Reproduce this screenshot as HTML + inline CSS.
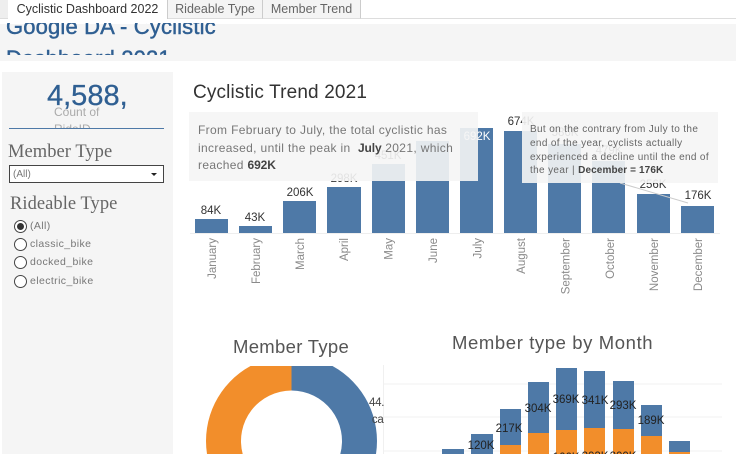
<!DOCTYPE html>
<html><head><meta charset="utf-8"><style>
html,body{margin:0;padding:0;background:#fff;overflow:hidden}
#p{position:relative;width:736px;height:454px;overflow:hidden;background:#fff;font-family:"Liberation Sans",sans-serif;color:#555}
#p div{position:absolute;white-space:nowrap}
.b{background:#4e79a7}.o{background:#f28e2b}
.v{font-size:11.5px;color:#333;text-align:center;width:44px;line-height:13px}
.m{font-size:11.5px;color:#8a8a8a;transform-origin:right top;transform:rotate(-90deg);line-height:13px;text-align:right}
.s{font-size:11.5px;color:#222;text-align:center;width:44px;line-height:13px}
.r{width:11px;height:11px;border:1px solid #444;border-radius:50%;left:14px;background:#fff}
.l{left:30px;font-size:10.5px;color:#777;letter-spacing:.4px;line-height:13px}
.t{top:0;height:18px;line-height:18px;font-size:12.5px;text-align:center;color:#666;background:#f4f4f4;border-right:1px solid #ccc;border-bottom:1px solid #ddd}
.n{font-size:12px;color:#777;line-height:17.5px;letter-spacing:.35px}
.n b{color:#444;letter-spacing:-.1px}
</style></head><body><div id="p">
<div style="left:0;top:0;width:736px;height:18px;background:#fff;border-bottom:1px solid #ddd"></div>
<div class="t" style="left:0;width:8px;background:#eee"></div>
<div class="t" style="left:8px;width:159px;background:#fff;color:#333;border-bottom:none;height:19px">Cyclistic Dashboard 2022</div>
<div class="t" style="left:168px;width:94px">Rideable Type</div>
<div class="t" style="left:263px;width:97px">Member Trend</div>

<div style="left:0;top:24px;width:736px;height:37px;background:#f5f5f5"></div>
<div style="left:0;top:23px;width:736px;height:32px;overflow:hidden">
<div style="left:6px;top:-12.5px;font-size:22px;color:#2f5f92;line-height:32px;letter-spacing:.15px;-webkit-text-stroke:.45px #2f5f92">Google DA - Cyclistic<br>Dashboard 2021</div>
</div>

<div style="left:2px;top:72px;width:171px;height:382px;background:#f5f5f5"></div>
<div style="left:30px;top:79px;width:99px;height:36px;overflow:hidden"><div style="left:17px;top:0;font-size:29px;color:#2f5f92;line-height:34px;-webkit-text-stroke:.3px #2f5f92">4,588,</div></div>
<div style="left:54px;top:104px;width:60px;height:24px;overflow:hidden;font-size:12px;color:#aaa;line-height:17px"><span style="display:block">Count of</span><span style="display:block">RideID</span></div>
<div style="left:9px;top:128px;width:155px;height:1px;background:#4e79a7"></div>
<div style="left:8px;top:142px;font-family:'Liberation Serif',serif;font-size:18.5px;color:#666;line-height:21px;letter-spacing:.05px">Member Type</div>
<div style="left:9px;top:165px;width:153px;height:16px;background:#fff;border:1px solid #444"></div>
<div style="left:13px;top:168px;font-size:10px;color:#777;line-height:13px">(All)</div>
<div style="left:151px;top:173px;width:0;height:0;border-left:3px solid transparent;border-right:3px solid transparent;border-top:3px solid #222"></div>
<div style="left:10px;top:194px;font-family:'Liberation Serif',serif;font-size:18.5px;color:#666;line-height:21px;letter-spacing:.05px">Rideable Type</div>
<div class="r" style="top:220px"></div><div style="left:17px;top:223px;width:7px;height:7px;border-radius:50%;background:#333"></div>
<div class="l" style="top:220px">(All)</div>
<div class="r" style="top:238px"></div><div class="l" style="top:238px">classic_bike</div>
<div class="r" style="top:256px"></div><div class="l" style="top:256px">docked_bike</div>
<div class="r" style="top:275px"></div><div class="l" style="top:275px">electric_bike</div>

<div style="left:193px;top:81px;font-size:19px;color:#333;line-height:23px;letter-spacing:.15px">Cyclistic Trend 2021</div>

<div style="left:190px;top:233px;width:530px;height:1px;background:#eee"></div>
<div class="b" style="left:195px;top:219px;width:33px;height:14px"></div>
<div class="b" style="left:239px;top:226px;width:33px;height:7px"></div>
<div class="b" style="left:283px;top:201px;width:33px;height:32px"></div>
<div class="b" style="left:327px;top:187px;width:34px;height:46px"></div>
<div class="b" style="left:372px;top:164px;width:33px;height:69px"></div>
<div class="b" style="left:416px;top:141px;width:33px;height:92px"></div>
<div class="b" style="left:460px;top:128px;width:33px;height:105px"></div>
<div class="b" style="left:504px;top:131px;width:33px;height:102px"></div>
<div class="b" style="left:548px;top:144px;width:33px;height:89px"></div>
<div class="b" style="left:592px;top:161px;width:33px;height:72px"></div>
<div class="b" style="left:637px;top:194px;width:33px;height:39px"></div>
<div class="b" style="left:681px;top:206px;width:33px;height:27px"></div>

<div class="v" style="left:189px;top:205px">84K</div>
<div class="v" style="left:233px;top:212px">43K</div>
<div class="v" style="left:278px;top:187px">206K</div>
<div class="v" style="left:322px;top:173px">298K</div>
<div class="v" style="left:366px;top:150px">451K</div>
<div class="v" style="left:455px;top:131px;color:#fff">692K</div>
<div class="v" style="left:499px;top:116px">674K</div>
<div class="v" style="left:543px;top:127px">586K</div>
<div class="v" style="left:587px;top:145px">479K</div>
<div class="v" style="left:631px;top:179px">256K</div>
<div class="v" style="left:676px;top:190px">176K</div>

<div class="m" style="right:529px;top:238px">January</div>
<div class="m" style="right:485px;top:238px">February</div>
<div class="m" style="right:441px;top:238px">March</div>
<div class="m" style="right:397px;top:238px">April</div>
<div class="m" style="right:352px;top:238px">May</div>
<div class="m" style="right:308px;top:238px">June</div>
<div class="m" style="right:264px;top:238px">July</div>
<div class="m" style="right:220px;top:238px">August</div>
<div class="m" style="right:176px;top:238px">September</div>
<div class="m" style="right:131px;top:238px">October</div>
<div class="m" style="right:87px;top:238px">November</div>
<div class="m" style="right:43px;top:238px">December</div>

<svg style="position:absolute;left:0;top:0" width="736" height="454"><line x1="620" y1="183" x2="688" y2="203" stroke="#ccc" stroke-width="1"/></svg>

<div style="left:189px;top:112px;width:289px;height:69px;background:rgba(245,245,245,.9)"></div>
<div class="n" style="left:198px;top:122px">From February to July, the total cyclistic has<br>increased, until the peak in&nbsp; <b>July</b> 2021, which<br>reached <b>692K</b></div>
<div style="left:522px;top:112px;width:196px;height:71px;background:rgba(245,245,245,.9)"></div>
<div style="left:530px;top:123px;font-size:10px;color:#666;line-height:13.8px;letter-spacing:.35px">But on the contrary from July to the<br>end of the year, cyclists actually<br>experienced a decline until the end of<br>the year | <b style="color:#444;letter-spacing:.1px">December = 176K</b></div>

<div style="left:233px;top:335px;font-size:18.5px;color:#555;line-height:23px;letter-spacing:.3px">Member Type</div>
<div style="left:452px;top:331px;font-size:18.5px;color:#555;line-height:23px;letter-spacing:.6px">Member type by Month</div>

<svg style="position:absolute;left:0;top:0" width="736" height="454">
<path d="M291.5 366L250.5 366A85.5 85.5 0 0 0 207 454L242.7 454A50.5 50.5 0 0 1 291.5 390.5Z" fill="#f28e2b"/>
<path d="M291.5 366L332.5 366A85.5 85.5 0 0 1 376 454L340.3 454A50.5 50.5 0 0 0 291.5 390.5Z" fill="#4e79a7"/>
<line x1="383" y1="384" x2="722" y2="384" stroke="#f0f0f0"/>
<line x1="383" y1="417" x2="722" y2="417" stroke="#f0f0f0"/>
<line x1="383" y1="451" x2="722" y2="451" stroke="#f0f0f0"/>
<line x1="383.5" y1="365" x2="383.5" y2="454" stroke="#f0f0f0"/>
</svg>
<div style="left:369px;top:395px;width:15px;height:36px;overflow:hidden;font-size:11.5px;color:#444;line-height:17px;letter-spacing:-.3px">44.<br>&nbsp;ca</div>

<div class="b" style="left:442px;top:449px;width:22px;height:5px"></div>
<div class="b" style="left:471px;top:434px;width:22px;height:20px"></div>
<div class="b" style="left:500px;top:409px;width:21px;height:45px"></div><div class="o" style="left:500px;top:445px;width:21px;height:9px"></div>
<div class="b" style="left:528px;top:382px;width:21px;height:72px"></div><div class="o" style="left:528px;top:433px;width:21px;height:21px"></div>
<div class="b" style="left:556px;top:368px;width:21px;height:86px"></div><div class="o" style="left:556px;top:430px;width:21px;height:24px"></div>
<div class="b" style="left:584px;top:371px;width:21px;height:83px"></div><div class="o" style="left:584px;top:428px;width:21px;height:26px"></div>
<div class="b" style="left:613px;top:381px;width:21px;height:73px"></div><div class="o" style="left:613px;top:429px;width:21px;height:25px"></div>
<div class="b" style="left:641px;top:405px;width:21px;height:49px"></div><div class="o" style="left:641px;top:436px;width:21px;height:18px"></div>
<div class="b" style="left:669px;top:441px;width:21px;height:13px"></div><div class="o" style="left:669px;top:452px;width:21px;height:2px"></div>
<div class="s" style="left:459px;top:440px">120K</div>
<div class="s" style="left:487px;top:423px">217K</div>
<div class="s" style="left:516px;top:403px">304K</div>
<div class="s" style="left:544px;top:394px">369K</div>
<div class="s" style="left:573px;top:395px">341K</div>
<div class="s" style="left:601px;top:400px">293K</div>
<div class="s" style="left:629px;top:415px">189K</div>
<div class="s" style="left:544px;top:452px;height:2px;overflow:hidden">166K</div>
<div class="s" style="left:573px;top:451px;height:3px;overflow:hidden">202K</div>
<div class="s" style="left:601px;top:451px;height:3px;overflow:hidden">200K</div>
</div></body></html>
